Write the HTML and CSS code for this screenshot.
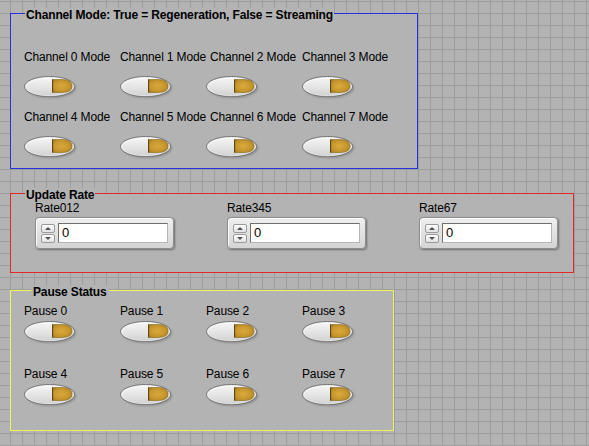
FILE: index.html
```html
<!DOCTYPE html>
<html>
<head>
<meta charset="utf-8">
<title>Front Panel</title>
<link rel="stylesheet" href="styles.css">
</head>
<body>
<svg class="defs" width="0" height="0" aria-hidden="true">
  <defs>
    <linearGradient id="tgBody" x1="0" y1="0" x2="0" y2="1">
      <stop offset="0" stop-color="#f6f6f6"/>
      <stop offset="0.55" stop-color="#e4e4e4"/>
      <stop offset="1" stop-color="#d0d0d0"/>
    </linearGradient>
    <radialGradient id="tgGold" cx="0.45" cy="0.5" r="0.6">
      <stop offset="0" stop-color="#d8aa3c"/>
      <stop offset="0.7" stop-color="#c5952c"/>
      <stop offset="1" stop-color="#a67c20"/>
    </radialGradient>
    <filter id="tgBlur" x="-20%" y="-30%" width="140%" height="160%">
      <feGaussianBlur stdDeviation="1"/>
    </filter>
    <symbol id="tg" viewBox="0 0 54 24">
      <ellipse cx="27" cy="12" rx="25" ry="10" fill="#6a6a6a" opacity="0.55" filter="url(#tgBlur)"/>
      <ellipse cx="25.5" cy="10.5" rx="25" ry="10" fill="url(#tgBody)" stroke="#5e5e5e" stroke-width="0.8"/>
      <ellipse cx="25.5" cy="11" rx="23.6" ry="8.8" fill="none" stroke="#ffffff" stroke-width="0.7" opacity="0.7"/>
      <path d="M28.5 3.5 H38 Q48.2 3.5 48.2 10 Q48.2 16.5 38 16.5 H28.5 Z" fill="url(#tgGold)" stroke="#8a6a22" stroke-width="0.6"/>
      <line x1="28.6" y1="3.6" x2="28.6" y2="16.4" stroke="#5f4614" stroke-width="1.1"/>
    </symbol>
  </defs>
</svg>

<section class="frame frame-blue">
  <div class="frame-title"><span>Channel Mode: True = Regeneration, False = Streaming</span></div>
  <div class="toggles toggles-mode">
    <div class="item"><div class="label">Channel 0 Mode</div><svg class="tg" viewBox="0 0 54 24"><use href="#tg"/></svg></div>
    <div class="item"><div class="label">Channel 1 Mode</div><svg class="tg" viewBox="0 0 54 24"><use href="#tg"/></svg></div>
    <div class="item"><div class="label shift">Channel 2 Mode</div><svg class="tg" viewBox="0 0 54 24"><use href="#tg"/></svg></div>
    <div class="item"><div class="label">Channel 3 Mode</div><svg class="tg" viewBox="0 0 54 24"><use href="#tg"/></svg></div>
    <div class="item"><div class="label">Channel 4 Mode</div><svg class="tg" viewBox="0 0 54 24"><use href="#tg"/></svg></div>
    <div class="item"><div class="label">Channel 5 Mode</div><svg class="tg" viewBox="0 0 54 24"><use href="#tg"/></svg></div>
    <div class="item"><div class="label shift">Channel 6 Mode</div><svg class="tg" viewBox="0 0 54 24"><use href="#tg"/></svg></div>
    <div class="item"><div class="label">Channel 7 Mode</div><svg class="tg" viewBox="0 0 54 24"><use href="#tg"/></svg></div>
  </div>
</section>

<section class="frame frame-red">
  <div class="frame-title"><span>Update Rate</span></div>
  <div class="rates">
    <div class="rate">
      <div class="label">Rate012</div>
      <div class="num">
        <div class="spin"><span class="btn up"></span><span class="btn dn"></span></div>
        <div class="field">0</div>
      </div>
    </div>
    <div class="rate">
      <div class="label">Rate345</div>
      <div class="num">
        <div class="spin"><span class="btn up"></span><span class="btn dn"></span></div>
        <div class="field">0</div>
      </div>
    </div>
    <div class="rate">
      <div class="label">Rate67</div>
      <div class="num">
        <div class="spin"><span class="btn up"></span><span class="btn dn"></span></div>
        <div class="field">0</div>
      </div>
    </div>
  </div>
</section>

<section class="frame frame-yellow">
  <div class="frame-title title-pause"><span>Pause Status</span></div>
  <div class="toggles toggles-pause">
    <div class="item"><div class="label">Pause 0</div><svg class="tg" viewBox="0 0 54 24"><use href="#tg"/></svg></div>
    <div class="item"><div class="label">Pause 1</div><svg class="tg" viewBox="0 0 54 24"><use href="#tg"/></svg></div>
    <div class="item"><div class="label">Pause 2</div><svg class="tg" viewBox="0 0 54 24"><use href="#tg"/></svg></div>
    <div class="item"><div class="label">Pause 3</div><svg class="tg" viewBox="0 0 54 24"><use href="#tg"/></svg></div>
    <div class="item"><div class="label">Pause 4</div><svg class="tg" viewBox="0 0 54 24"><use href="#tg"/></svg></div>
    <div class="item"><div class="label">Pause 5</div><svg class="tg" viewBox="0 0 54 24"><use href="#tg"/></svg></div>
    <div class="item"><div class="label">Pause 6</div><svg class="tg" viewBox="0 0 54 24"><use href="#tg"/></svg></div>
    <div class="item"><div class="label">Pause 7</div><svg class="tg" viewBox="0 0 54 24"><use href="#tg"/></svg></div>
  </div>
</section>
</body>
</html>
```

FILE: styles.css
```css
html {
  height: 100%;
}
body {
  margin: 0;
  min-height: 100%;
  padding-top: 13px;
  box-sizing: border-box;
  overflow: hidden;
  font-family: "Liberation Sans", Arial, sans-serif;
  font-size: 12px;
  color: #000;
  background-color: #b3b3b3;
  background-image:
    linear-gradient(to right, #9d9d9d 1px, transparent 1px),
    linear-gradient(to bottom, #9d9d9d 1px, transparent 1px);
  background-size: 12px 12px;
  background-position: 10px 1px;
}
.defs {
  position: absolute;
  width: 0;
  height: 0;
  overflow: hidden;
}

.frame {
  box-sizing: border-box;
  margin-left: 10px;
  background: #b3b3b3;
}
.frame-blue {
  width: 408px;
  height: 156px;
  border: 1px solid #2233dd;
}
.frame-red {
  width: 564px;
  height: 80px;
  margin-top: 24px;
  border: 1px solid #e02828;
}
.frame-yellow {
  width: 384px;
  height: 141px;
  margin-top: 17px;
  border: 1px solid #f2f25a;
}

.frame-title {
  margin-top: -6px;
  padding-left: 14px;
  height: 14px;
  line-height: 14px;
  font-weight: bold;
  letter-spacing: -0.15px;
  white-space: nowrap;
}
.frame-title span {
  display: inline-block;
  background: #b3b3b3;
  padding: 0 1px;
}
.title-pause {
  padding-left: 20px;
}
.title-pause span {
  padding: 0 2px;
}

.label {
  line-height: 14px;
  height: 14px;
  letter-spacing: -0.15px;
  white-space: nowrap;
}
.label.shift {
  margin-left: 4px;
}

.toggles {
  display: grid;
  grid-template-columns: 96px 86px 96px 96px;
  padding-left: 13px;
}
.toggles-mode {
  margin-top: 28px;
  row-gap: 10px;
}
.toggles-mode .label {
  margin-bottom: 12px;
}
.toggles-pause {
  margin-top: 5px;
  row-gap: 22px;
}
.toggles-pause .label {
  margin-bottom: 3px;
}
.tg {
  display: block;
  width: 54px;
  height: 24px;
}

.rates {
  display: flex;
  margin-top: -1px;
  padding-left: 24px;
}
.rate {
  flex: 0 0 192px;
}
.rate:last-child {
  flex: 0 0 auto;
}
.rate .label {
  margin-bottom: 2px;
}
.num {
  box-sizing: border-box;
  display: flex;
  gap: 3px;
  width: 139px;
  height: 32px;
  padding: 5px;
  border: 1px solid #8e8e8e;
  border-radius: 4px;
  background: linear-gradient(#efefef, #d4d4d4);
  box-shadow: 1px 1px 2px rgba(0, 0, 0, 0.4), inset 1px 1px 0 #fbfbfb;
}
.spin {
  display: flex;
  flex-direction: column;
  width: 14px;
  gap: 1px;
  padding-top: 1px;
}
.btn {
  box-sizing: border-box;
  position: relative;
  height: 9px;
  border: 1px solid #9a9a9a;
  border-radius: 2px;
  background: linear-gradient(#fdfdfd, #e2e2e2);
}
.btn::after {
  content: "";
  position: absolute;
  left: 3px;
  width: 0;
  height: 0;
  border-left: 3px solid transparent;
  border-right: 3px solid transparent;
}
.up::after {
  top: 2px;
  border-bottom: 3px solid #505050;
}
.dn::after {
  top: 2px;
  border-top: 3px solid #505050;
}
.field {
  box-sizing: border-box;
  flex: 1;
  height: 20px;
  padding-left: 3px;
  line-height: 18px;
  font-size: 13px;
  background: #fff;
  border: 1px solid;
  border-color: #6f6f6f #b4b4b4 #b4b4b4 #6f6f6f;
}
```
